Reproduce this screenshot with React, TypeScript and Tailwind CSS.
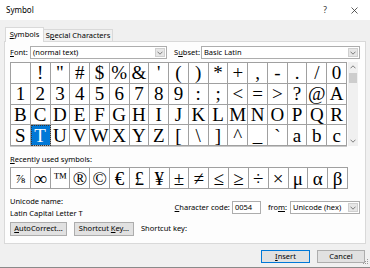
import React from "react";

const rows: string[][] = [
  [" ", "!", '"', "#", "$", "%", "&", "'", "(", ")", "*", "+", ",", "-", ".", "/", "0"],
  ["1", "2", "3", "4", "5", "6", "7", "8", "9", ":", ";", "<", "=", ">", "?", "@", "A"],
  ["B", "C", "D", "E", "F", "G", "H", "I", "J", "K", "L", "M", "N", "O", "P", "Q", "R"],
  ["S", "T", "U", "V", "W", "X", "Y", "Z", "[", "\\", "]", "^", "_", "`", "a", "b", "c"],
];

const recent: string[] = ["⅞", "∞", "™", "®", "©", "€", "£", "¥", "±", "≠", "≤", "≥", "÷", "×", "μ", "α", "β"];

function Chevron({ up }: { up?: boolean }) {
  return (
    <svg width="6" height="4" viewBox="0 0 6 4">
      <path
        d={up ? "M0.5 3.3 L3 0.8 L5.5 3.3" : "M0.5 0.7 L3 3.2 L5.5 0.7"}
        fill="none"
        stroke="#606060"
        strokeWidth="0.8"
      />
    </svg>
  );
}

function Combo({ className, text }: { className: string; text: string }) {
  return (
    <div className={"flex h-[13px] items-stretch border border-[#adadad] bg-white " + className}>
      <span className="flex-1 pl-[2px] flex items-center">{text}</span>
      <span className="w-[10px] m-[1px] bg-[#e6e6e6] border border-[#cfcfcf] flex items-center justify-center">
        <Chevron />
      </span>
    </div>
  );
}

export default function App() {
  return (
    <div className="w-[370px] h-[268px] bg-[#f0f0f0] relative overflow-hidden font-['Noto_Sans','Open_Sans',sans-serif] text-[7.5px] text-black leading-none border-b border-[#8a8a8a] flex flex-col">
      {/* title bar */}
      <div className="h-[20px] bg-white flex items-center shrink-0">
        <span className="ml-[6px] text-[8px]">Symbol</span>
        <span className="ml-auto mr-[24px] text-[8.5px] text-[#333]">?</span>
        <svg className="mr-[12px]" width="7" height="7" viewBox="0 0 7 7">
          <path d="M0.5 0.5 L6.5 6.5 M6.5 0.5 L0.5 6.5" stroke="#333" strokeWidth="0.8" />
        </svg>
      </div>

      {/* tabs */}
      <div className="mt-[7px] h-[14px] pl-[5px] flex items-end shrink-0">
        <div className="relative z-10 -mb-[1px] h-[15px] w-[39px] border border-b-0 border-[#d9d9d9] bg-[#fdfdfd] flex items-center justify-center">
          <span>
            <u>S</u>ymbols
          </span>
        </div>
        <div className="h-[12px] w-[69px] border border-l-0 border-b-0 border-[#d9d9d9] bg-[#f0f0f0] flex items-center justify-center">
          <span>
            S<u>p</u>ecial Characters
          </span>
        </div>
      </div>

      {/* panel */}
      <div className="mx-[4px] h-[203px] shrink-0 border border-[#d9d9d9] bg-[#fdfdfd] px-[5px] pt-[4px] flex flex-col">
        <div className="h-[13px] flex items-center">
          <span className="w-[20px]">
            <u>F</u>ont:
          </span>
          <Combo className="w-[137px]" text="(normal text)" />
          <span className="ml-[7px] w-[27px]">
            S<u>u</u>bset:
          </span>
          <Combo className="w-[159px]" text="Basic Latin" />
        </div>

        <div className="mt-[3px] flex">
          <div className="w-[337px] h-[84px] border-l border-t border-[#a0a0a0] grid grid-cols-17 grid-rows-4 font-['Liberation_Serif',serif] text-[19px] shadow-[0_1px_0_#c8c8c8]">
            {rows.map((r, ri) =>
              r.map((c, ci) => {
                const sel = ri === 3 && ci === 1;
                return (
                  <div
                    key={ri + "-" + ci}
                    className={
                      "flex items-center justify-center border-r border-b border-[#a0a0a0] " +
                      (sel ? "bg-[#0078d7] text-white outline-1 outline-dotted outline-[#333] -outline-offset-1" : "bg-white")
                    }
                  >
                    {c}
                  </div>
                );
              })
            )}
          </div>
          <div className="ml-[1px] w-[10px] h-[84px] bg-[#f0f0f0] flex flex-col">
            <div className="h-[10px] flex items-center justify-center">
              <Chevron up />
            </div>
            <div className="mt-[1px] mx-[1px] h-[10px] bg-[#cdcdcd]" />
            <div className="flex-1" />
            <div className="h-[10px] flex items-center justify-center">
              <Chevron />
            </div>
          </div>
        </div>

        <div className="mt-[9px] h-[10px] flex items-center">
          <span>
            <u>R</u>ecently used symbols:
          </span>
        </div>

        <div className="mt-[2px] w-[338px] h-[22px] border-l border-t border-[#a0a0a0] grid grid-cols-17 font-['Liberation_Serif',serif] text-[19px]">
          {recent.map((c, i) => (
            <div
              key={i}
              className={
                "flex items-center justify-center border-r border-b border-[#a0a0a0] bg-white " +
                (i === 0 ? "text-[13px]" : i === 2 ? "text-[14px]" : "")
              }
            >
              {c}
            </div>
          ))}
        </div>

        <div className="mt-[6px] flex">
          <div className="flex flex-col leading-[12px]">
            <span>Unicode name:</span>
            <span>Latin Capital Letter T</span>
          </div>
          <div className="ml-auto mt-[6px] h-[13px] flex items-center">
            <span>
              <u>C</u>haracter code:
            </span>
            <div className="ml-[2px] w-[29px] h-[13px] border border-[#adadad] bg-white flex items-center pl-[2px]">
              0054
            </div>
            <span className="ml-[7px]">
              fro<u>m</u>:
            </span>
            <div className="ml-[3px]">
              <Combo className="w-[70px]" text="Unicode (hex)" />
            </div>
          </div>
        </div>

        <div className="mt-[3px] h-[14px] flex items-center">
          <div className="w-[57px] h-[14px] border border-[#adadad] bg-[#e1e1e1] flex items-center justify-center">
            <span>
              <u>A</u>utoCorrect...
            </span>
          </div>
          <div className="ml-[7px] w-[60px] h-[14px] border border-[#adadad] bg-[#e1e1e1] flex items-center justify-center">
            <span>
              Shortcut <u>K</u>ey...
            </span>
          </div>
          <span className="ml-[7px]">Shortcut key:</span>
        </div>
      </div>

      {/* bottom buttons */}
      <div className="mt-[6px] flex justify-end pr-[5px] gap-[7px]">
        <div className="w-[49px] h-[13px] border border-[#0078d7] bg-[#e1e1e1] flex items-center justify-center">
          <span>
            <u>I</u>nsert
          </span>
        </div>
        <div className="w-[48px] h-[13px] border border-[#adadad] bg-[#e1e1e1] flex items-center justify-center">
          <span>Cancel</span>
        </div>
      </div>

      <svg className="absolute right-[1px] bottom-[2px]" width="6" height="6" viewBox="0 0 6 6">
        <rect x="4" y="0" width="1" height="1" fill="#999" />
        <rect x="2" y="2" width="1" height="1" fill="#999" />
        <rect x="4" y="2" width="1" height="1" fill="#999" />
        <rect x="0" y="4" width="1" height="1" fill="#999" />
        <rect x="2" y="4" width="1" height="1" fill="#999" />
        <rect x="4" y="4" width="1" height="1" fill="#999" />
      </svg>
    </div>
  );
}
